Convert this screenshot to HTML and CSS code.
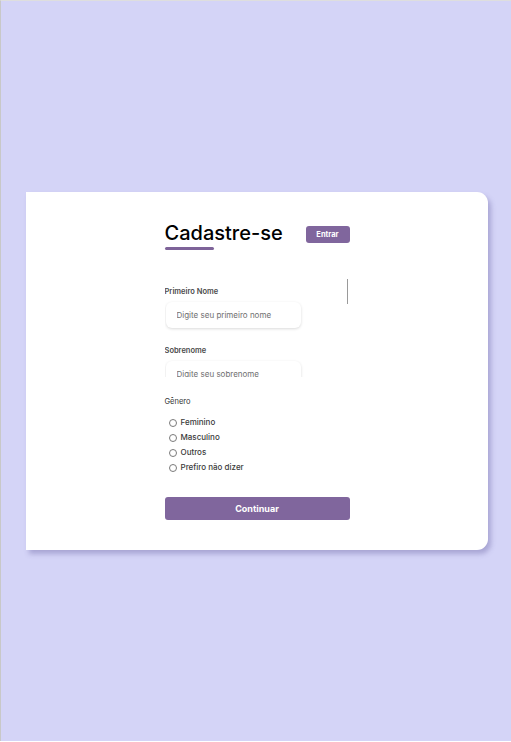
FILE: index.html
```html
<!DOCTYPE html>
<html lang="pt-BR">
<head>
    <meta charset="UTF-8">
    <meta name="viewport" content="width=device-width, initial-scale=1.0">
    <title>Cadastre-se</title>
    <link rel="stylesheet" href="styles.css">
</head>
<body>
    <div class="page">
        <div class="card">
            <form class="form">
                <!-- cabeçalho -->
                <div class="form-header">
                    <div class="title">
                        <h1>Cadastre-se</h1>
                        <div class="underline"></div>
                    </div>
                    <button type="button" class="login-btn">Entrar</button>
                </div>

                <!-- campos com rolagem -->
                <div class="fields-wrap">
                    <div class="fields">
                        <div class="field">
                            <label for="firstname">Primeiro Nome</label>
                            <input id="firstname" type="text" placeholder="Digite seu primeiro nome">
                        </div>
                        <div class="field">
                            <label for="lastname">Sobrenome</label>
                            <input id="lastname" type="text" placeholder="Digite seu sobrenome">
                        </div>
                        <div class="field">
                            <label for="email">E-mail</label>
                            <input id="email" type="email" placeholder="Digite seu e-mail">
                        </div>
                        <div class="field">
                            <label for="number">Celular</label>
                            <input id="number" type="tel" placeholder="(xx) xxxx-xxxx">
                        </div>
                        <div class="field">
                            <label for="password">Senha</label>
                            <input id="password" type="password" placeholder="Digite sua senha">
                        </div>
                        <div class="field">
                            <label for="confirm">Confirme sua Senha</label>
                            <input id="confirm" type="password" placeholder="Digite sua senha novamente">
                        </div>
                    </div>
                    <div class="scroll-thumb"></div>
                </div>

                <!-- gênero -->
                <div class="gender">
                    <div class="gender-title">Gênero</div>
                    <div class="gender-list">
                        <label class="gender-item"><input type="radio" name="gender"> Feminino</label>
                        <label class="gender-item"><input type="radio" name="gender"> Masculino</label>
                        <label class="gender-item"><input type="radio" name="gender"> Outros</label>
                        <label class="gender-item"><input type="radio" name="gender"> Prefiro não dizer</label>
                    </div>
                </div>

                <button type="button" class="continue-btn">Continuar</button>
            </form>
        </div>
    </div>
</body>
</html>
```

FILE: styles.css
```css
* {
    box-sizing: border-box;
}

body {
    margin: 0;
    font-family: 'Inter', 'Noto Sans', sans-serif;
    background: #ffffff;
}

.page {
    height: 741px;
    background: #d4d4f7;
    border-top: 1px solid #dedede;
    border-left: 1px solid #c8c8c8;
    display: flex;
    align-items: center;
    padding-left: 25px;
}

.card {
    width: 462px;
    background: #ffffff;
    border-radius: 0 11px 11px 0;
    box-shadow: 3px 4px 5px rgba(90, 80, 150, 0.35);
    padding: 28px 0 30px;
}

.form {
    width: 185px;
    margin: 0 auto;
}

.form-header {
    display: flex;
    justify-content: space-between;
    align-items: flex-start;
}

.title h1 {
    margin: 0;
    font-size: 20px;
    line-height: 26px;
    font-weight: 500;
    color: #000000;
}

.underline {
    width: 49px;
    height: 3px;
    margin-top: 1px;
    background: #7e6399;
    border-radius: 2px;
}

.login-btn {
    margin-top: 6px;
    width: 44px;
    height: 17px;
    border: none;
    border-radius: 3px;
    background: #80669d;
    color: #ffffff;
    font-family: inherit;
    font-size: 7.5px;
    font-weight: 700;
    padding: 0;
}

.fields-wrap {
    position: relative;
    margin-top: 29px;
}

.fields {
    height: 98px;
    overflow-y: auto;
    padding-top: 8px;
    scrollbar-width: none;
}

.fields::-webkit-scrollbar {
    display: none;
}

/* barra de rolagem fina */
.scroll-thumb {
    position: absolute;
    top: 0;
    right: 2px;
    width: 1px;
    height: 25px;
    background: #9a9a9a;
}

.field {
    display: flex;
    flex-direction: column;
    margin-bottom: 18px;
}

.field label {
    font-size: 7.5px;
    line-height: 10px;
    font-weight: 600;
    color: #4a4a4a;
    margin-bottom: 5px;
}

.field input {
    width: 135px;
    height: 26px;
    margin-left: 1px;
    border: none;
    border-radius: 6px;
    padding: 0 11px;
    font-family: inherit;
    font-size: 8px;
    box-shadow: 0 1px 3px rgba(0, 0, 0, 0.15);
    outline: none;
}

.field input::placeholder {
    color: #6f6f6f;
}

.gender {
    margin-top: 20px;
}

.gender-title {
    font-size: 7.5px;
    line-height: 10px;
    color: #333333;
}

.gender-list {
    margin-top: 8px;
    padding-left: 4px;
    display: flex;
    flex-direction: column;
}

.gender-item {
    display: flex;
    align-items: center;
    height: 15px;
    line-height: 15px;
    font-size: 8px;
    font-weight: 500;
    color: #3a3a3a;
}

.gender-item input {
    appearance: none;
    width: 8px;
    height: 8px;
    margin: 0 4px 0 0;
    border: 1px solid #7a7a7a;
    border-radius: 50%;
}

.continue-btn {
    display: block;
    width: 100%;
    height: 23px;
    margin-top: 22px;
    border: none;
    border-radius: 3px;
    background: #80669d;
    color: #ffffff;
    font-family: inherit;
    font-size: 9px;
    font-weight: 700;
}
```
